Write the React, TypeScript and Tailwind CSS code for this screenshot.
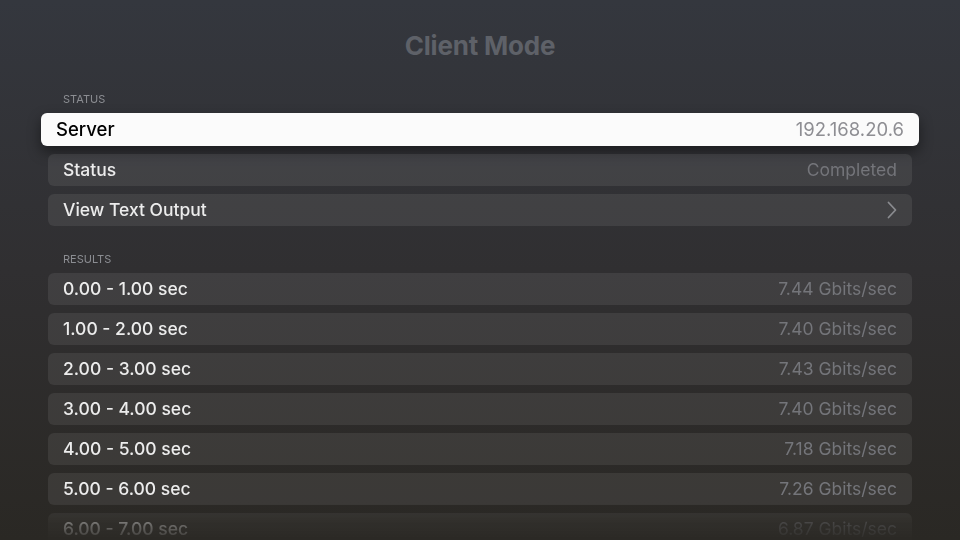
const results = [
  { range: "0.00 - 1.00 sec", rate: "7.44 Gbits/sec" },
  { range: "1.00 - 2.00 sec", rate: "7.40 Gbits/sec" },
  { range: "2.00 - 3.00 sec", rate: "7.43 Gbits/sec" },
  { range: "3.00 - 4.00 sec", rate: "7.40 Gbits/sec" },
  { range: "4.00 - 5.00 sec", rate: "7.18 Gbits/sec" },
  { range: "5.00 - 6.00 sec", rate: "7.26 Gbits/sec" },
  { range: "6.00 - 7.00 sec", rate: "6.87 Gbits/sec" },
];

function Chevron() {
  return (
    <svg viewBox="0 0 10 18" className="h-[18px] w-[10px] text-[#8a8b8f]" fill="none">
      <path d="M1.5 1.5 L8.5 9 L1.5 16.5" stroke="currentColor" strokeWidth="1.8" strokeLinecap="round" strokeLinejoin="round" />
    </svg>
  );
}

function Row({ label, value, chevron }: { label: string; value?: string; chevron?: boolean }) {
  return (
    <div className="flex h-8 shrink-0 items-center justify-between rounded-md bg-white/[0.08] px-[15px]">
      <span className="text-[17.5px] font-medium text-[#ececec]">{label}</span>
      {value ? <span className="text-[17.5px] text-[#74757a]">{value}</span> : null}
      {chevron ? <Chevron /> : null}
    </div>
  );
}

export default function App() {
  return (
    <div className="relative flex h-[540px] w-[960px] flex-col overflow-hidden bg-gradient-to-b from-[#34373e] via-[#302f31] to-[#2a2824] font-['Inter','Noto_Sans',sans-serif]">
      <h1 className="pt-[30px] text-center text-[26px] font-bold leading-8 tracking-[-0.2px] text-[#5e6168]">
        Client Mode
      </h1>

      <div className="flex flex-col px-12 [mask-image:linear-gradient(to_bottom,black_0px,black_441px,rgba(0,0,0,0.35)_462px,transparent_482px)]">
        <div className="mt-[30px] mb-[7px] pl-[15px] text-[11px] uppercase leading-[14px] text-[#8b8d92]">
          Status
        </div>
        <div className="flex flex-col gap-2">
          <div className="-mx-[7px] flex h-[33px] items-center justify-between rounded-md bg-[#fbfbfb] px-[15px] shadow-[0_6px_14px_rgba(0,0,0,0.45)]">
            <span className="text-[18.5px] font-medium text-black">Server</span>
            <span className="text-[18.5px] text-[#8e8e93]">192.168.20.6</span>
          </div>
          <Row label="Status" value="Completed" />
          <Row label="View Text Output" chevron />
        </div>

        <div className="mt-[26px] mb-[7px] pl-[15px] text-[11px] uppercase leading-[14px] text-[#8b8d92]">
          Results
        </div>
        <div className="flex flex-col gap-2">
          {results.map((r) => (
            <Row key={r.range} label={r.range} value={r.rate} />
          ))}
        </div>
      </div>
    </div>
  );
}
